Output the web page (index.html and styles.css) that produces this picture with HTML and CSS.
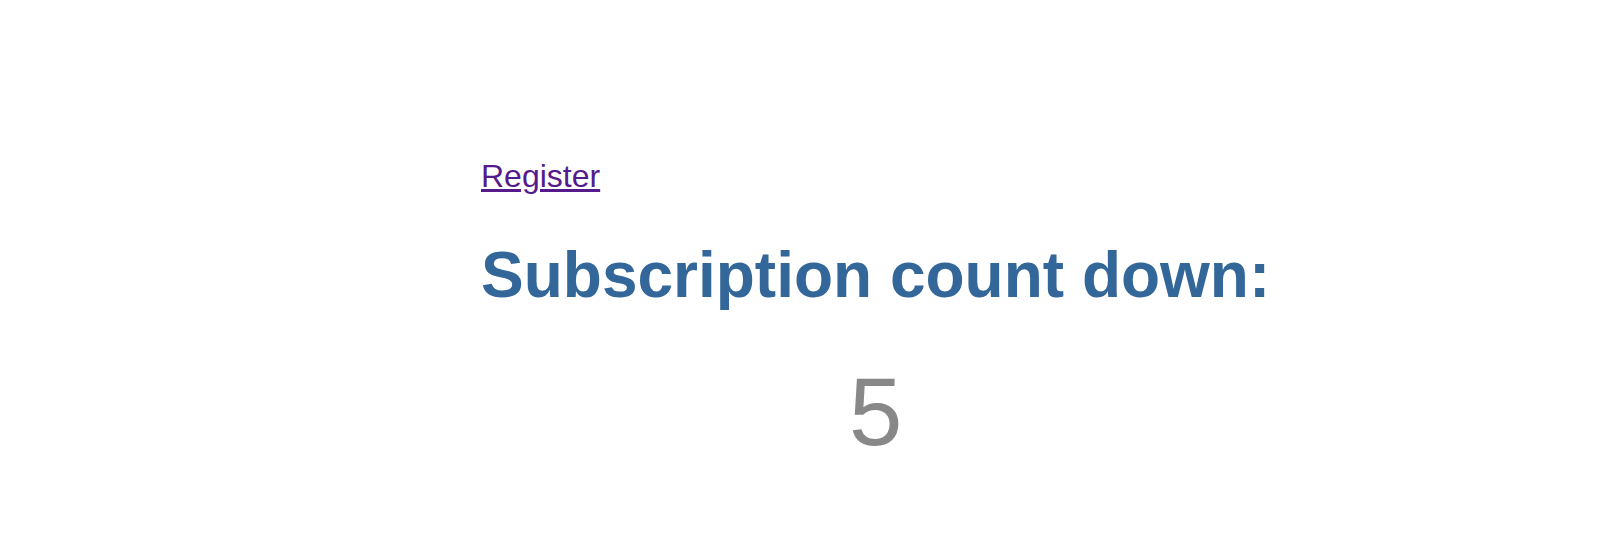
FILE: index.html
```html
<!DOCTYPE html>
<html lang="en">
<head>
    <meta charset="UTF-8">
    <meta name="viewport" content="width=device-width, initial-scale=1.0">
    <title>Subscription</title>
    <link rel="stylesheet" href="styles.css">
</head>
<body>
    <div class="page">
        <div class="content">
            <p class="nav"><a href="#register" class="register-link">Register</a></p>
            <h1 class="title">Subscription count down:</h1>
            <div class="counter" id="counter">5</div>
        </div>
    </div>
</body>
</html>
```

FILE: styles.css
```css
body {
    margin: 0;
    font-family: "Liberation Sans", Arial, sans-serif;
    background: #ffffff;
}
.page {
    padding-top: 158px;
    padding-left: 481px;
}
.content {
    display: inline-block;
}
.nav {
    margin: 0;
    font-size: 32px;
    line-height: 37px;
}
.register-link {
    color: #551a8b;
}
.title {
    margin: 43px 0 0 0;
    font-size: 64px;
    line-height: 74px;
    font-weight: bold;
    color: #336699;
}
.counter {
    margin-top: 45px;
    font-size: 96px;
    line-height: 110px;
    text-align: center;
    color: #888888;
}
```
